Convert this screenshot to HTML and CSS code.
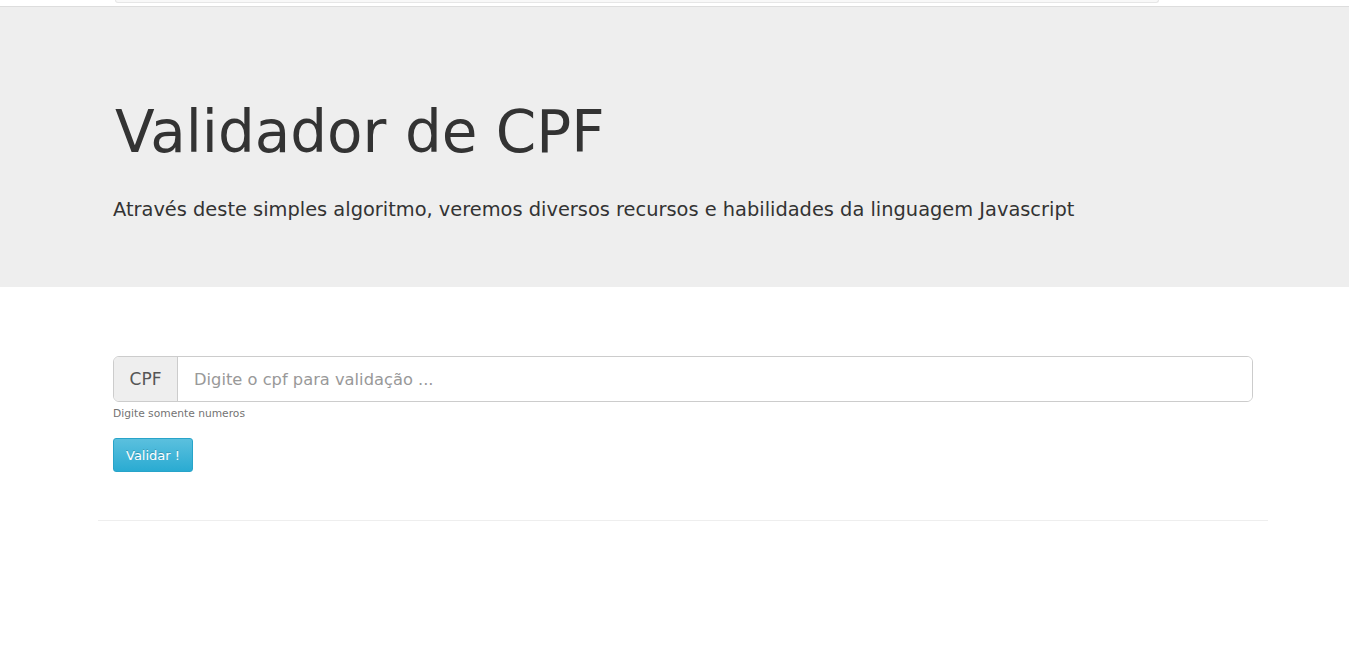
FILE: index.html
```html
<!DOCTYPE html>
<html lang="pt-BR">
<head>
  <meta charset="UTF-8">
  <title>Validador de CPF</title>
  <link rel="stylesheet" href="styles.css">
</head>
<body>
  <!-- Navbar scrolled out of view -->
  <div class="topbar">
    <div class="topbar-edge"></div>
  </div>

  <div class="jumbotron">
    <div class="container">
      <h1>Validador de CPF</h1>
      <p>Através deste simples algoritmo, veremos diversos recursos e habilidades da linguagem Javascript</p>
    </div>
  </div>

  <div class="container">
    <form class="cpf-form">
      <div class="input-group">
        <span class="addon">CPF</span>
        <input type="text" class="cpf-input" placeholder="Digite o cpf para validação ...">
      </div>
      <small class="help">Digite somente numeros</small>
      <button type="button" class="btn-info">Validar !</button>
    </form>
  </div>

  <div class="container-wide">
    <hr>
  </div>
</body>
</html>
```

FILE: styles.css
```css
body {
  margin: 0;
  font-family: "Comic Sans MS", "DejaVu Sans", sans-serif;
  color: #333;
  background: #fff;
}
.topbar {
  height: 6px;
  border-bottom: 1px solid #ddd;
}
.topbar-edge {
  margin-left: 115px;
  width: 1042px;
  height: 2px;
  border: 1px solid #e6e6e6;
  border-top: none;
  border-radius: 0 0 4px 4px;
  background: #f8f8f8;
}
.container {
  width: 1140px;
  margin-left: calc(50% - 561.5px);
}
.container-wide {
  width: 1170px;
  margin-left: calc(50% - 576.5px);
}
.jumbotron {
  background: #eee;
  height: 280px;
  padding-top: 1px;
  box-sizing: border-box;
}
.jumbotron h1 {
  font-size: 58px;
  font-weight: normal;
  line-height: 1.1;
  margin: 93px 0 0 2px;
  color: #333;
}
.jumbotron p {
  font-size: 19.4px;
  margin: 33px 0 0;
  color: #333;
}
.cpf-form {
  padding-top: 69px;
}
.input-group {
  display: flex;
  height: 46px;
  border: 1px solid #ccc;
  border-radius: 6px;
  box-sizing: border-box;
  overflow: hidden;
}
.addon {
  width: 63px;
  background: #eee;
  border-right: 1px solid #ccc;
  display: flex;
  align-items: center;
  justify-content: center;
  font-size: 17px;
  color: #555;
}
.cpf-input {
  flex: 1;
  border: none;
  outline: none;
  padding: 0 16px;
  font-family: inherit;
  font-size: 16.3px;
  color: #555;
}
.cpf-input::placeholder {
  color: #999;
}
.help {
  display: block;
  font-size: 10.7px;
  color: #737373;
  margin-top: 5px;
}
.btn-info {
  display: block;
  margin-top: 18px;
  width: 80px;
  height: 34px;
  border: 1px solid #28a4c9;
  border-radius: 3px;
  background: linear-gradient(#5bc0de, #2aabd2);
  color: #fff;
  font-family: inherit;
  font-size: 13px;
  padding: 0;
  text-shadow: 0 -1px 0 rgba(0, 0, 0, .2);
}
hr {
  margin: 48px 0 0;
  border: 0;
  border-top: 1px solid #eee;
}
```
